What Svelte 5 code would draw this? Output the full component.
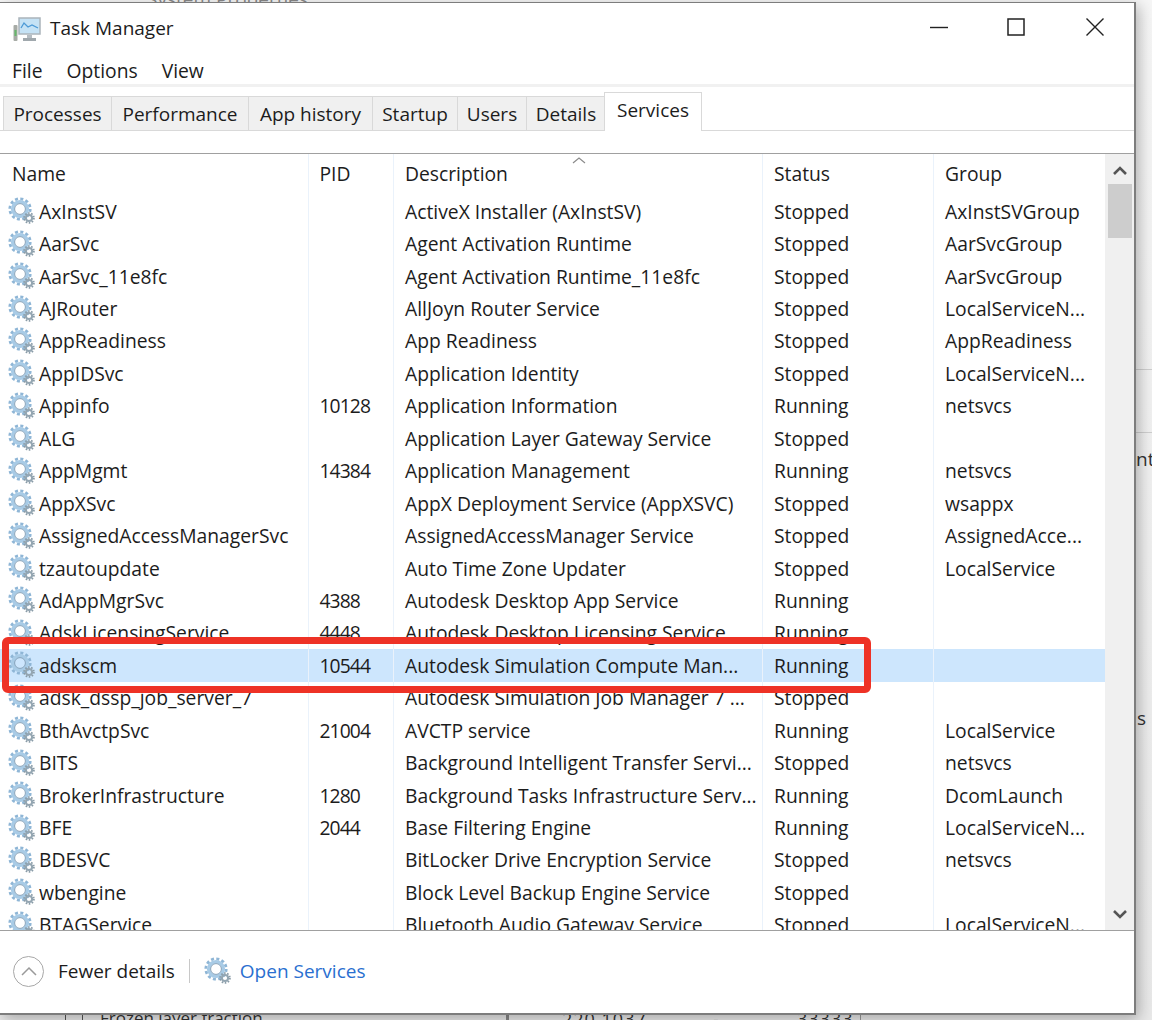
<script>
  const tabs = ['Processes', 'Performance', 'App history', 'Startup', 'Users', 'Details', 'Services'];
  const tabWidths = [109, 138, 125, 86, 70, 80, 98];
  const rows = [
    ['AxInstSV', '', 'ActiveX Installer (AxInstSV)', 'Stopped', 'AxInstSVGroup'],
    ['AarSvc', '', 'Agent Activation Runtime', 'Stopped', 'AarSvcGroup'],
    ['AarSvc_11e8fc', '', 'Agent Activation Runtime_11e8fc', 'Stopped', 'AarSvcGroup'],
    ['AJRouter', '', 'AllJoyn Router Service', 'Stopped', 'LocalServiceN...'],
    ['AppReadiness', '', 'App Readiness', 'Stopped', 'AppReadiness'],
    ['AppIDSvc', '', 'Application Identity', 'Stopped', 'LocalServiceN...'],
    ['Appinfo', '10128', 'Application Information', 'Running', 'netsvcs'],
    ['ALG', '', 'Application Layer Gateway Service', 'Stopped', ''],
    ['AppMgmt', '14384', 'Application Management', 'Running', 'netsvcs'],
    ['AppXSvc', '', 'AppX Deployment Service (AppXSVC)', 'Stopped', 'wsappx'],
    ['AssignedAccessManagerSvc', '', 'AssignedAccessManager Service', 'Stopped', 'AssignedAcce...'],
    ['tzautoupdate', '', 'Auto Time Zone Updater', 'Stopped', 'LocalService'],
    ['AdAppMgrSvc', '4388', 'Autodesk Desktop App Service', 'Running', ''],
    ['AdskLicensingService', '4448', 'Autodesk Desktop Licensing Service', 'Running', ''],
    ['adskscm', '10544', 'Autodesk Simulation Compute Man...', 'Running', ''],
    ['adsk_dssp_job_server_7', '', 'Autodesk Simulation Job Manager 7 ...', 'Stopped', ''],
    ['BthAvctpSvc', '21004', 'AVCTP service', 'Running', 'LocalService'],
    ['BITS', '', 'Background Intelligent Transfer Servi...', 'Stopped', 'netsvcs'],
    ['BrokerInfrastructure', '1280', 'Background Tasks Infrastructure Serv...', 'Running', 'DcomLaunch'],
    ['BFE', '2044', 'Base Filtering Engine', 'Running', 'LocalServiceN...'],
    ['BDESVC', '', 'BitLocker Drive Encryption Service', 'Stopped', 'netsvcs'],
    ['wbengine', '', 'Block Level Backup Engine Service', 'Stopped', ''],
    ['BTAGService', '', 'Bluetooth Audio Gateway Service', 'Stopped', 'LocalServiceN...']
  ];
</script>

{#snippet gear(size)}
  <svg class="gear" width={size} height={size} viewBox="0 0 28 28" aria-hidden="true">
    <g fill="none">
      <circle cx="12" cy="12" r="10.2" stroke="#8fb6d6" stroke-width="2.8" stroke-dasharray="3 2.34"/>
      <circle cx="12" cy="12" r="7.4" stroke="#a8cbe6" stroke-width="3.4"/>
      <circle cx="12" cy="12" r="5.4" stroke="#7d9ab2" stroke-width="0.9"/>
      <circle cx="21" cy="21" r="3.1" stroke="#94a6b2" stroke-width="2"/>
      <circle cx="21" cy="21" r="4.9" stroke="#8a9ca8" stroke-width="1.8" stroke-dasharray="1.6 1.48"/>
    </g>
  </svg>
{/snippet}

<div class="desktop">
  <div class="behind-title">System Properties</div>
  <div class="behind-edge e1"></div>
  <div class="behind-edge e2"></div>
  <div class="behind-text t1">nt</div>
  <div class="behind-text t2">s</div>
  <div class="behind-text t3">Frozen layer fraction</div>
  <div class="behind-text t4">220 1037</div>
  <div class="behind-text t5">-</div>
  <div class="behind-text t6">33333</div>
  <div class="behind-line l1"></div>
  <div class="behind-line l2"></div>
  <div class="behind-line l3"></div>
  <div class="behind-line l4"></div>

  <div class="window">
    <header class="titlebar">
      <svg class="appicon" width="28" height="26" viewBox="0 0 28 26" aria-hidden="true">
        <rect x="0.5" y="8" width="4" height="16" rx="1" fill="#a7aba6"/>
        <rect x="1.5" y="13" width="2" height="6" fill="#66b76a"/>
        <rect x="6" y="1" width="21" height="16" fill="#c5e2f5" stroke="#aab4bb" stroke-width="1.5"/>
        <path d="M8 11 L11 6 L15 10 L19 8 L25 11" fill="none" stroke="#4d9ad6" stroke-width="1.3"/>
        <rect x="14" y="18" width="5" height="3" fill="#b5bdc3"/>
        <rect x="10" y="21" width="13" height="3" fill="#a0a8ad"/>
      </svg>
      <span class="title">Task Manager</span>
      <div class="controls">
        <span class="ctl"><svg width="18" height="18" viewBox="0 0 18 18"><path d="M0 9.5h18" stroke="#222" stroke-width="1.4"/></svg></span>
        <span class="ctl"><svg width="18" height="18" viewBox="0 0 18 18"><rect x="1" y="1" width="16" height="16" fill="none" stroke="#222" stroke-width="1.5"/></svg></span>
        <span class="ctl"><svg width="20" height="20" viewBox="0 0 20 20"><path d="M1.5 1.5l17 17M18.5 1.5l-17 17" stroke="#222" stroke-width="1.4"/></svg></span>
      </div>
    </header>

    <nav class="menu"><span>File</span><span>Options</span><span>View</span></nav>

    <div class="tabs">
      {#each tabs as t, i}
        <div class="tab" class:active={t === 'Services'} style:width="{tabWidths[i]}px">{t}</div>
      {/each}
    </div>

    <div class="sortbar"></div>

    <div class="table">
      <div class="list">
        <div class="row head">
          <div class="cell c1">Name</div>
          <div class="cell c2">PID</div>
          <div class="cell c3">Description<svg class="sort" width="14" height="7" viewBox="0 0 14 7"><path d="M1 6l6-5 6 5" fill="none" stroke="#8c8c8c" stroke-width="1.2"/></svg></div>
          <div class="cell c4">Status</div>
          <div class="cell c5">Group</div>
        </div>
        <div class="vline v1"></div>
        <div class="vline v2"></div>
        <div class="vline v3"></div>
        <div class="vline v4"></div>
        {#each rows as r}
          <div class="row" class:sel={r[0] === 'adskscm'}>
            <div class="cell c1">{@render gear(28)}<span>{r[0]}</span></div>
            <div class="cell c2">{r[1]}</div>
            <div class="cell c3">{r[2]}</div>
            <div class="cell c4">{r[3]}</div>
            <div class="cell c5">{r[4]}</div>
          </div>
        {/each}
      </div>
      <div class="scrollbar">
        <svg class="arrow up" width="16" height="10" viewBox="0 0 16 10"><path d="M2 8l6-6 6 6" fill="none" stroke="#555" stroke-width="2.6"/></svg>
        <div class="thumb"></div>
        <svg class="arrow down" width="16" height="10" viewBox="0 0 16 10"><path d="M2 2l6 6 6-6" fill="none" stroke="#555" stroke-width="2.6"/></svg>
      </div>
    </div>

    <footer class="footer">
      <span class="circle"><svg width="18" height="10" viewBox="0 0 18 10"><path d="M2 9l7-7 7 7" fill="none" stroke="#9a9a9a" stroke-width="1.5"/></svg></span>
      <span class="fewer">Fewer details</span>
      <span class="sep"></span>
      {@render gear(28)}
      <span class="open">Open Services</span>
    </footer>
  </div>

  <div class="callout"></div>
</div>

<style>
  :global(body) { margin: 0; background: #f2f2f2; }
  .desktop {
    position: relative;
    width: 1152px;
    height: 1020px;
    overflow: hidden;
    background: linear-gradient(#f6f6f6, #e9e9e9);
    font-family: "Open Sans", "Noto Sans", sans-serif;
    font-size: 19.3px;
    color: #1c1c1c;
  }
  .behind-title { position: absolute; left: 147px; top: -14px; color: #888; font-size: 19px; }
  .behind-edge { position: absolute; left: 1136px; right: 0; height: 1px; background: #cfcfcf; }
  .e1 { top: 369px; }
  .e2 { top: 432px; }
  .behind-text { position: absolute; color: #333; font-size: 17px; white-space: nowrap; }
  .t1 { left: 1136px; top: 446px; font-size: 19px; }
  .t2 { left: 1137px; top: 705px; font-size: 19px; }
  .t3 { left: 100px; top: 1006px; }
  .t4 { left: 562px; top: 1007px; letter-spacing: 1px; font-size: 18px; }
  .t5 { left: 713px; top: 1007px; font-size: 18px; }
  .t6 { left: 797px; top: 1007px; letter-spacing: 1px; font-size: 18px; }
  .behind-line { position: absolute; top: 1012px; bottom: 0; width: 1px; background: #555; }
  .l1 { left: 65px; }
  .l2 { left: 82px; }
  .l3 { left: 506px; width: 3px; background: #888; }
  .l4 { left: 860px; background: #999; }

  .window {
    position: absolute;
    left: 0;
    top: 2px;
    width: 1134px;
    height: 1010px;
    display: flex;
    flex-direction: column;
    background: #fff;
    border: solid #7d7d7d;
    border-width: 1px 2px 2px 0;
    box-shadow: 3px 4px 14px rgba(0, 0, 0, 0.28);
  }
  .titlebar { display: flex; align-items: center; height: 47px; flex: none; padding-left: 13px; }
  .appicon { flex: none; margin-top: 6px; }
  .title { margin-left: 9px; margin-top: 3px; font-size: 19px; }
  .controls { display: flex; margin-left: auto; align-items: center; height: 100%; }
  .ctl { width: 78px; display: flex; justify-content: center; align-items: center; }
  .ctl:nth-child(2) { transform: translateX(-1px); }
  .menu { display: flex; gap: 24px; height: 37px; flex: none; align-items: center; padding: 7px 0 0 12px; box-sizing: border-box; border-bottom: 3px solid #f1f1f1; }
  .tabs { display: flex; flex: none; height: 43px; align-items: flex-end; box-sizing: border-box; border-bottom: 1px solid #d9d9d9; padding-left: 3px; margin-top: 1px; font-size: 19px; }
  .tab { box-sizing: border-box; height: 34px; margin-right: -1px; display: flex; align-items: center; justify-content: center; background: #f0f0f0; border: 1px solid #d9d9d9; border-bottom: 0; flex: none; }
  .tab.active { height: 39px; background: #fff; margin-bottom: -1px; padding-bottom: 4px; position: relative; transform: translateX(-1px); }
  .sortbar { height: 22px; flex: none; border-bottom: 1px solid #a0a0a0; }

  .table { display: flex; flex: 1; min-height: 0; overflow: hidden; }
  .list { flex: 1; position: relative; overflow: hidden; }
  .row { display: grid; grid-template-columns: 308px 85px 369px 171px 172px; height: 32.45px; align-items: center; white-space: nowrap; }
  .row.head { height: 41px; padding-bottom: 3px; box-sizing: border-box; }
  .row.sel { background: #cde6fd; }
  .cell { padding-left: 12px; position: relative; display: flex; align-items: center; }
  .c1 { padding-left: 8px; }
  .head .c1 { padding-left: 12px; }
  .c1 span { margin-left: 3px; }
  .c2 { padding-left: 11.5px; letter-spacing: -0.9px; }
  .head .c2 { letter-spacing: 0; }
  .gear { flex: none; }
  .sort { position: absolute; left: 179px; top: -3px; }
  .vline { position: absolute; top: 0; bottom: 0; width: 1px; background: #eaf2fb; }
  .v1 { left: 308px; } .v2 { left: 393px; } .v3 { left: 762px; } .v4 { left: 933px; }

  .scrollbar { width: 29px; flex: none; background: #f0f0f0; position: relative; }
  .thumb { position: absolute; left: 3px; right: 2px; top: 30px; height: 54px; background: #cdcdcd; }
  .arrow { position: absolute; left: 7px; }
  .up { top: 12px; }
  .down { bottom: 11px; }

  .footer { flex: none; height: 83px; display: flex; align-items: center; padding: 0 0 2px 13px; box-sizing: border-box; border-top: 1px solid #a0a0a0; }
  .circle { width: 31px; height: 31px; box-sizing: border-box; border: 1.5px solid #a8a8a8; border-radius: 50%; display: flex; align-items: center; justify-content: center; }
  .fewer { margin-left: 14px; font-size: 19px; }
  .sep { width: 1px; height: 24px; background: #c8c8c8; margin: 0 14px; }
  .open { color: #2a6fd0; margin-left: 8px; font-size: 19px; }

  .callout {
    position: absolute;
    left: 2px;
    top: 637px;
    width: 869px;
    height: 56px;
    box-sizing: border-box;
    border: 7px solid #ee3226;
    border-radius: 6px;
    pointer-events: none;
  }
</style>
